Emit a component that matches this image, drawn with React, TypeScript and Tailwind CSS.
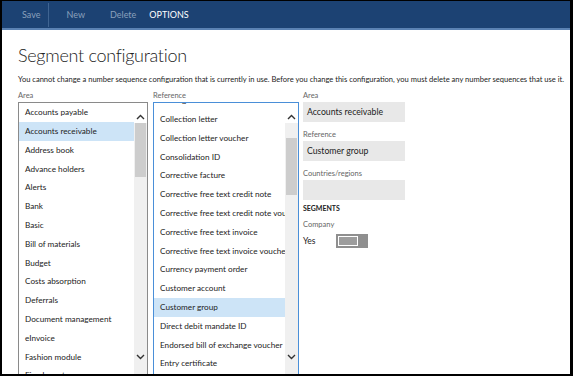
const areas = [
  'Accounts payable',
  'Accounts receivable',
  'Address book',
  'Advance holders',
  'Alerts',
  'Bank',
  'Basic',
  'Bill of materials',
  'Budget',
  'Costs absorption',
  'Deferrals',
  'Document management',
  'eInvoice',
  'Fashion module',
  'Fixed assets',
]

const references = [
  'Closing voucher',
  'Collection letter',
  'Collection letter voucher',
  'Consolidation ID',
  'Corrective facture',
  'Corrective free text credit note',
  'Corrective free text credit note voucher',
  'Corrective free text invoice',
  'Corrective free text invoice voucher',
  'Currency payment order',
  'Customer account',
  'Customer group',
  'Direct debit mandate ID',
  'Endorsed bill of exchange voucher',
  'Entry certificate',
  'Exchange adjustment',
]

function ChevronUp() {
  return (
    <svg width="9" height="6" viewBox="0 0 9 6" fill="none">
      <path d="M1 5 L4.5 1.5 L8 5" stroke="#333" strokeWidth="1.4" />
    </svg>
  )
}

function ChevronDown() {
  return (
    <svg width="9" height="6" viewBox="0 0 9 6" fill="none">
      <path d="M1 1 L4.5 4.5 L8 1" stroke="#333" strokeWidth="1.4" />
    </svg>
  )
}

function Scrollbar({ thumbTop, thumbHeight }: { thumbTop: number; thumbHeight: number }) {
  return (
    <div className="w-[13px] shrink-0 flex flex-col bg-[#f0f0f0]">
      <div className="h-[20px] flex items-end justify-center pb-[3px] bg-white">
        <ChevronUp />
      </div>
      <div className="flex-1 flex flex-col">
        <div style={{ height: thumbTop }} />
        <div className="mx-[1px] bg-[#cdcdcd]" style={{ height: thumbHeight }} />
      </div>
      <div className="h-[22px] flex items-start justify-center pt-[2px]">
        <ChevronDown />
      </div>
    </div>
  )
}

export default function App() {
  return (
    <div
      className="w-[573px] h-[376px] overflow-hidden bg-white border-l-2 border-r-[3px] border-b-2 border-t border-black flex flex-col"
      style={{ fontFamily: 'Lato, "Open Sans", sans-serif' }}
    >
      {/* command bar */}
      <div className="h-[29px] shrink-0 bg-[#1c4273] border-b-2 border-[#5b82b3] flex items-center text-[9px]">
        <span className="ml-[20px] text-[#8aa0bc]">Save</span>
        <div className="ml-[8px] w-px h-[24px] bg-[#3f6492]" />
        <span className="ml-[17px] text-[#8aa0bc]">New</span>
        <span className="ml-[25px] text-[#8aa0bc]">Delete</span>
        <span className="ml-[13px] text-white">OPTIONS</span>
      </div>

      <div className="flex-1 flex flex-col pl-[16px] min-h-0">
        <h1 className="mt-[13px] text-[18px] font-light tracking-[-0.3px] leading-[24px] text-[#222]">
          Segment configuration
        </h1>
        <p className="mt-[8px] text-[7.55px] leading-[10px] text-[#222] whitespace-nowrap">
          You cannot change a number sequence configuration that is currently in use. Before you change
          this configuration, you must delete any number sequences that use it.
        </p>

        <div className="mt-[5px] flex flex-1 min-h-0">
          {/* Area list */}
          <div className="w-[130px] flex flex-col">
            <div className="text-[7.5px] leading-[11px] text-[#666]">Area</div>
            <div className="mt-[1px] flex-1 border border-[#8a8a8a] border-b-0 flex min-h-0">
              <div className="flex-1 overflow-hidden">
                {areas.map((a) => (
                  <div
                    key={a}
                    className={`h-[18.8px] flex items-center pl-[6px] text-[8.2px] text-[#222] whitespace-nowrap ${
                      a === 'Accounts receivable' ? 'bg-[#cde4f7]' : ''
                    }`}
                  >
                    {a}
                  </div>
                ))}
              </div>
              <Scrollbar thumbTop={0} thumbHeight={54} />
            </div>
          </div>

          {/* Reference list */}
          <div className="ml-[5px] w-[146px] flex flex-col">
            <div className="text-[7.5px] leading-[11px] text-[#666]">Reference</div>
            <div className="mt-[1px] flex-1 border border-[#4a8fd8] border-b-0 flex min-h-0">
              <div className="flex-1 overflow-hidden">
                <div className="-mt-[12px]">
                  {references.map((r) => (
                    <div
                      key={r}
                      className={`h-[18.8px] flex items-center pl-[6px] text-[8.2px] text-[#222] whitespace-nowrap overflow-hidden ${
                        r === 'Customer group' ? 'bg-[#cde4f7]' : ''
                      }`}
                    >
                      {r}
                    </div>
                  ))}
                </div>
              </div>
              <Scrollbar thumbTop={15} thumbHeight={57} />
            </div>
          </div>

          {/* Details */}
          <div className="ml-[4px] w-[102px] flex flex-col">
            <div className="text-[7.5px] leading-[11px] text-[#666]">Area</div>
            <div className="mt-[1px] h-[20px] bg-[#e8e8e8] flex items-center pl-[4px] text-[8.7px] text-[#222]">
              Accounts receivable
            </div>
            <div className="mt-[7px] text-[7.5px] leading-[11px] text-[#666]">Reference</div>
            <div className="mt-[1px] h-[20px] bg-[#e8e8e8] flex items-center pl-[4px] text-[8.7px] text-[#222]">
              Customer group
            </div>
            <div className="mt-[7px] text-[7.5px] leading-[11px] text-[#666]">Countries/regions</div>
            <div className="mt-[1px] h-[20px] bg-[#e8e8e8]" />
            <div className="mt-[3px] text-[7px] leading-[11px] font-bold text-[#222]">SEGMENTS</div>
            <div className="mt-[5px] text-[7.5px] leading-[11px] text-[#666]">Company</div>
            <div className="mt-[4px] flex items-center">
              <span className="text-[8.5px] text-[#222]">Yes</span>
              <div className="ml-[20px] w-[32px] h-[14px] bg-[#8f8f8f] p-[2px] flex">
                <div className="w-[20px] h-full border border-white bg-[#9d9d9d]" />
              </div>
            </div>
          </div>
        </div>
      </div>
    </div>
  )
}
